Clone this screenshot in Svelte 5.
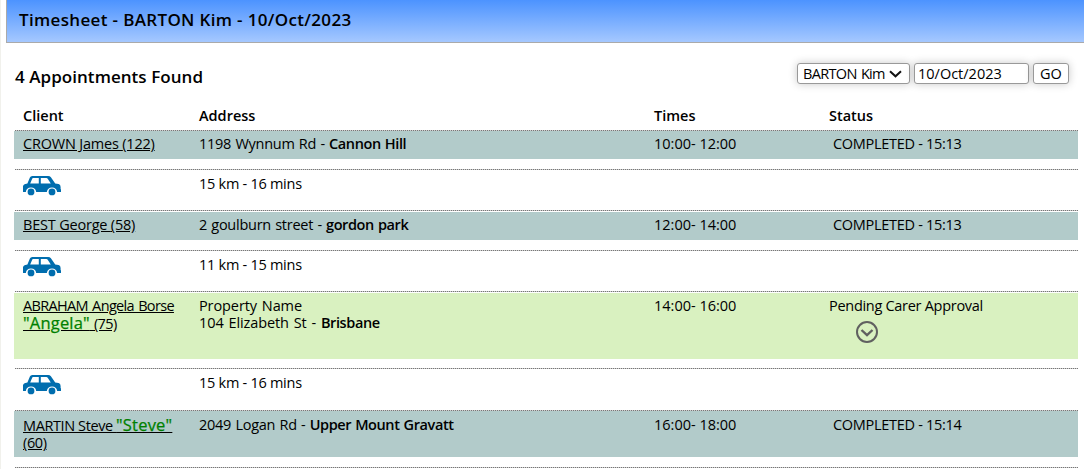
<script lang="ts">
  type Visit = {
    kind: 'visit'
    client: string
    nick?: string
    id: number
    property?: string
    street: string
    suburb: string
    times: string
    status: string
    pending?: boolean
    height: number
    gap: number
  }
  type Travel = { kind: 'travel'; text: string; height: number }

  const title = 'Timesheet - BARTON Kim - 10/Oct/2023'
  let carer = $state('BARTON Kim')
  let date = $state('10/Oct/2023')

  const rows: (Visit | Travel)[] = [
    { kind: 'visit', client: 'CROWN James', id: 122, street: '1198 Wynnum Rd', suburb: 'Cannon Hill', times: '10:00- 12:00', status: 'COMPLETED - 15:13', height: 28, gap: 0 },
    { kind: 'travel', text: '15 km - 16 mins', height: 41 },
    { kind: 'visit', client: 'BEST George', id: 58, street: '2 goulburn street', suburb: 'gordon park', times: '12:00- 14:00', status: 'COMPLETED - 15:13', height: 28, gap: 1 },
    { kind: 'travel', text: '11 km - 15 mins', height: 41 },
    { kind: 'visit', client: 'ABRAHAM Angela Borse', nick: 'Angela', id: 75, property: 'Property Name', street: '104 Elizabeth St', suburb: 'Brisbane', times: '14:00- 16:00', status: 'Pending Carer Approval', pending: true, height: 66, gap: 1 },
    { kind: 'travel', text: '15 km - 16 mins', height: 42 },
    { kind: 'visit', client: 'MARTIN Steve', nick: 'Steve', id: 60, street: '2049 Logan Rd', suburb: 'Upper Mount Gravatt', times: '16:00- 18:00', status: 'COMPLETED - 15:14', height: 46, gap: 0 }
  ]
</script>

<div class="page">
  <header>{title}</header>

  <div class="toolbar">
    <h2>4 Appointments Found</h2>
    <form onsubmit={(e) => e.preventDefault()}>
      <button type="button" class="carer">
        <span>{carer}</span>
        <svg width="13" height="8" viewBox="0 0 13 8"><path d="M1 1.2 6.5 6.3 12 1.2" fill="none" stroke="#111" stroke-width="2" /></svg>
      </button>
      <input bind:value={date} aria-label="Date" />
      <button class="go">GO</button>
    </form>
  </div>

  <div class="table">
    <div class="cols head"><span>Client</span><span>Address</span><span>Times</span><span>Status</span></div>
    {#each rows as row}
      <div class="rule"></div>
      {#if row.kind === 'travel'}
        <div class="cols travel" style={`height:${row.height - 1}px`}>
          <svg class="car" width="38" height="20" viewBox="0 0 38 20">
            <path fill="#006dae" fill-rule="evenodd" d="M0 16V10.2Q0 8.2 4.4 7.4L6.9 1.6Q7.5 0 9.3 0H25.2Q26.9 0 27.9 1.3L32.2 7.4 35.6 8.1Q37.6 8.8 37.6 11V13.2H38V16H34.2Q33.4 11.4 29 11.4T23.8 16H13.2Q12.6 11.4 8 11.4T2.8 16ZM9.3 2.4 7.2 7.6H15.8V2H10Q9.5 2 9.3 2.4ZM17.8 2V7.6H27.8L24.7 2.7Q24.2 2 23.4 2Z" />
            <circle cx="8" cy="15.9" r="3.4" fill="#006dae" />
            <circle cx="29" cy="15.9" r="3.4" fill="#006dae" />
          </svg>
          <span class="distance">{row.text}</span>
        </div>
      {:else}
        <div class="cols visit" class:pending={row.pending} class:flush={row.gap === 0} style={`height:${row.height}px`}>
          <div class="client" class:late={row.nick && !row.pending}>
            <a href="#client">{row.client} {#if row.nick}<b>"{row.nick}"</b>{' '}{/if}({row.id})</a>
          </div>
          <div class="address">
            {#if row.property}{row.property}<br />{/if}{row.street} - <strong>{row.suburb}</strong>
          </div>
          <div class="times">{row.times}</div>
          <div class="status">
            {row.status}
            {#if row.pending}
              <svg width="22" height="22" viewBox="0 0 22 22" fill="none" stroke="#606060" stroke-width="2">
                <circle cx="11" cy="11" r="10" />
                <path d="M5.5 9 11 14.2 16.5 9" stroke-width="2.4" />
              </svg>
            {/if}
          </div>
        </div>
      {/if}
    {/each}
    <div class="rule"></div>
  </div>
</div>

<style>
  :global(body) { background: #fff; overflow: hidden; }
  .page { box-sizing: border-box; height: 469px; padding-left: 5px; overflow: hidden; border-left: 1px solid #f1f1ec; color: #000; font: 14.5px/17px 'Trebuchet MS', 'Open Sans', sans-serif; }
  header { box-sizing: border-box; height: 43px; padding: 0 12px; border-left: 1px solid #aaa; border-bottom: 1px solid #aaa; background: linear-gradient(#4c93ff, #a5c8ff); font-size: 17px; font-weight: 600; line-height: 40px; letter-spacing: .34px; }
  .toolbar { display: flex; justify-content: space-between; height: 58px; padding: 0 15px 0 9px; }
  h2 { margin: 24px 0 0; font-size: 17px; font-weight: 600; line-height: 20px; letter-spacing: .05px; }
  form { display: flex; gap: 4px; padding-top: 20px; }
  button, input { box-sizing: border-box; height: 21px; margin: 0; border: 1px solid #999; border-radius: 3px; background: #fff; color: #000; box-shadow: 0 0 8px rgba(0, 0, 0, .22); font: inherit; line-height: 19px; white-space: nowrap; }
  .carer { display: flex; align-items: center; justify-content: space-between; width: 113px; padding: 0 7px 0 5px; letter-spacing: -.65px; word-spacing: 1px; }
  input { width: 115px; padding: 0 3px; }
  .go { width: 36px; padding: 0; }
  .table { margin: 0 6px 0 8px; }
  .cols { display: grid; grid-template-columns: 176px 455px 175px 1fr; padding-left: 9px; }
  .head { height: 29px; padding-top: 6px; box-sizing: border-box; font-weight: 600; }
  .rule { height: 1px; margin-left: 1px; background: repeating-linear-gradient(90deg, #777 0 1px, #ccc 1px 2px); }
  .travel { box-sizing: border-box; padding-top: 5px; }
  .car { margin-top: 1px; }
  .distance { letter-spacing: -.27px; }
  .visit { box-sizing: border-box; margin: 1px 0 10px; padding-top: 4px; background: #b2cbca; }
  .visit.flush { margin-top: 0; }
  .visit.pending { margin-bottom: 9px; background: #d9f1c0; }
  .client { width: 158px; letter-spacing: -.2px; }
  .client.late { padding-top: 1px; letter-spacing: -.4px; }
  .flush:has(.late) { padding-top: 5px; }
  .flush .client.late { padding-top: 0; }
  .pending .client { letter-spacing: -.65px; word-spacing: 1px; }
  .client a { color: #000; text-decoration: underline; }
  .client b { color: #008000; font-size: 16.5px; font-weight: 400; line-height: 17px; letter-spacing: .2px; -webkit-text-stroke: .25px #008000; }
  .address { letter-spacing: -.25px; word-spacing: .7px; }
  .address strong { font-weight: 600; letter-spacing: -.4px; }
  .pending .address { letter-spacing: -.1px; word-spacing: 1.2px; }
  .status { letter-spacing: -.29px; }
  .visit:not(.pending) .status { padding-left: 4px; }
  .status svg { display: block; margin: 7px 0 0 27px; }
</style>
